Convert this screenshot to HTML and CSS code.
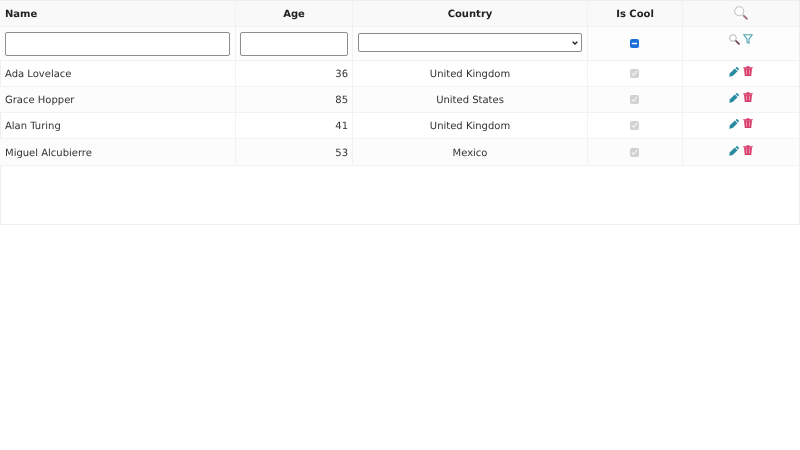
FILE: index.html
```html
<!DOCTYPE html>
<html lang="en">
<head>
<meta charset="utf-8">
<title>Grid</title>
<link rel="stylesheet" href="styles.css">
</head>
<body>
<div class="grid">
<table class="table">
<colgroup><col class="c-name"><col class="c-age"><col class="c-country"><col class="c-cool"><col class="c-actions"></colgroup>
<thead>
<tr class="head">
<th class="left">Name</th><th>Age</th><th>Country</th><th>Is Cool</th>
<th><svg class="icon-search-lg" viewBox="0 0 14 14"><circle cx="5.2" cy="5.2" r="4.5" fill="#fff" stroke="#c4c4c4" stroke-width="1.1"/><path d="M8.4 8.4l1.2 1.2" stroke="#b9b9b9" stroke-width="1.1"/><path d="M9.4 9.4l4 4" stroke="#a0626f" stroke-width="1.7"/></svg></th>
</tr>
<tr class="filter">
<td><input class="text" type="text"></td>
<td><input class="text" type="text"></td>
<td><select class="sel"><option></option></select></td>
<td class="center cool"><input class="chk chk-head" id="cool" type="checkbox"></td>
<td class="center"><div class="actions filter-actions">
<svg class="ic" viewBox="0 0 11 11"><circle cx="4" cy="4" r="3.3" fill="#fff" stroke="#b4b4b4"/><path d="M6.5 6.5l4 4" stroke="#6e3a48" stroke-width="1.6"/></svg>
<svg class="ic-f" viewBox="0 0 10 10"><path d="M.6.7h8.8L6 4.8v4.6L4 8.2V4.8z" fill="#fff" stroke="#4da5b0" stroke-width="1.1" stroke-linejoin="round"/></svg>
</div></td>
</tr>
</thead>
<tbody>
<tr><td>Ada Lovelace</td><td class="right">36</td><td class="center">United Kingdom</td><td class="center cool"><input class="chk" type="checkbox" checked disabled></td><td class="center"><div class="actions"><svg class="ic-p" viewBox="0 0 11 11"><path d="M.3 10.7L1 7l5.4-5.4 3 3L4 10z" fill="#2a8ba0"/><path d="M7.1 1L8.2.2c.4-.3.8-.2 1.1.1l1.4 1.4c.3.3.4.7.1 1.1L10 3.9z" fill="#2a8ba0"/></svg><svg class="ic-t" viewBox="0 0 10 10"><path d="M.2 1.2h9.6v1.1H.2zM3.2 1.3L3.7.2h2.6l.5 1.1z" fill="#d63a68"/><path d="M1 2.3h8L8.2 10H1.8z" fill="#d63a68"/><path d="M3.6 3.5v5.2M6.4 3.5v5.2" stroke="#f3a8bf" stroke-width=".9"/></svg></div></td></tr>
<tr class="odd"><td>Grace Hopper</td><td class="right">85</td><td class="center">United States</td><td class="center cool"><input class="chk" type="checkbox" checked disabled></td><td class="center"><div class="actions"><svg class="ic-p" viewBox="0 0 11 11"><path d="M.3 10.7L1 7l5.4-5.4 3 3L4 10z" fill="#2a8ba0"/><path d="M7.1 1L8.2.2c.4-.3.8-.2 1.1.1l1.4 1.4c.3.3.4.7.1 1.1L10 3.9z" fill="#2a8ba0"/></svg><svg class="ic-t" viewBox="0 0 10 10"><path d="M.2 1.2h9.6v1.1H.2zM3.2 1.3L3.7.2h2.6l.5 1.1z" fill="#d63a68"/><path d="M1 2.3h8L8.2 10H1.8z" fill="#d63a68"/><path d="M3.6 3.5v5.2M6.4 3.5v5.2" stroke="#f3a8bf" stroke-width=".9"/></svg></div></td></tr>
<tr><td>Alan Turing</td><td class="right">41</td><td class="center">United Kingdom</td><td class="center cool"><input class="chk" type="checkbox" checked disabled></td><td class="center"><div class="actions"><svg class="ic-p" viewBox="0 0 11 11"><path d="M.3 10.7L1 7l5.4-5.4 3 3L4 10z" fill="#2a8ba0"/><path d="M7.1 1L8.2.2c.4-.3.8-.2 1.1.1l1.4 1.4c.3.3.4.7.1 1.1L10 3.9z" fill="#2a8ba0"/></svg><svg class="ic-t" viewBox="0 0 10 10"><path d="M.2 1.2h9.6v1.1H.2zM3.2 1.3L3.7.2h2.6l.5 1.1z" fill="#d63a68"/><path d="M1 2.3h8L8.2 10H1.8z" fill="#d63a68"/><path d="M3.6 3.5v5.2M6.4 3.5v5.2" stroke="#f3a8bf" stroke-width=".9"/></svg></div></td></tr>
<tr class="odd"><td>Miguel Alcubierre</td><td class="right">53</td><td class="center">Mexico</td><td class="center cool"><input class="chk" type="checkbox" checked disabled></td><td class="center"><div class="actions"><svg class="ic-p" viewBox="0 0 11 11"><path d="M.3 10.7L1 7l5.4-5.4 3 3L4 10z" fill="#2a8ba0"/><path d="M7.1 1L8.2.2c.4-.3.8-.2 1.1.1l1.4 1.4c.3.3.4.7.1 1.1L10 3.9z" fill="#2a8ba0"/></svg><svg class="ic-t" viewBox="0 0 10 10"><path d="M.2 1.2h9.6v1.1H.2zM3.2 1.3L3.7.2h2.6l.5 1.1z" fill="#d63a68"/><path d="M1 2.3h8L8.2 10H1.8z" fill="#d63a68"/><path d="M3.6 3.5v5.2M6.4 3.5v5.2" stroke="#f3a8bf" stroke-width=".9"/></svg></div></td></tr>
</tbody>
</table>
</div>
<script>document.getElementById('cool').indeterminate = true;</script>
</body>
</html>
```
FILE: styles.css
```css
html, body { margin: 0; padding: 0; background: #fff; }
body { font-family: "DejaVu Sans", sans-serif; font-size: 10px; color: #333; text-rendering: geometricPrecision; }
.grid { box-sizing: border-box; width: 800px; height: 225px; border: 1px solid #eee; border-top: 0; }
.table { width: 799px; margin-right: -1px; margin-left: -1px; border-collapse: separate; border-spacing: 0; table-layout: fixed; filter: blur(.3px); }
.c-name { width: 236px; }
.c-age { width: 117px; }
.c-country { width: 235px; }
.c-cool { width: 95px; }
.c-actions { width: 116px; }
th, td { box-sizing: border-box; padding: 0 5px; border-right: 1px solid #f2f2f2; border-bottom: 1px solid #f2f2f2; text-align: left; vertical-align: middle; }
th:last-child, td:last-child { border-right: 0; }
th:nth-child(2), td:nth-child(2) { padding-left: 4px; padding-right: 4px; }
th { height: 27px; padding-top: 2px; background: #f9f9f9; color: #222; text-align: center; font-weight: 700; border-top: 1px solid #eee; line-height: 14px; }
th.left { text-align: left; }
.filter td { height: 34px; background: #fdfdfd; padding-top: 1px; }
tbody td { height: 26px; padding-top: 2px; }
tbody tr:last-child td { height: 27px; padding-top: 3px; }
.odd td { background: #fcfcfc; }
.center { text-align: center; }
.right { text-align: right; }
td.cool { padding-right: 7px; }
.text { display: block; box-sizing: border-box; width: 100%; height: 24px; margin: 0; padding: 1px 2px; border: 1px solid #8e8e8e; border-radius: 2px; background: #fff; }
.sel { display: block; box-sizing: border-box; width: 100%; height: 19px; margin: 0 0 3px; border: 1px solid #8a8a8a; border-radius: 2px; appearance: none; background: #fff url("data:image/svg+xml,%3Csvg xmlns='http://www.w3.org/2000/svg' width='6' height='4' viewBox='0 0 6 4'%3E%3Cpath d='M.7.7L3 3l2.3-2.3' fill='none' stroke='%23222' stroke-width='1.4'/%3E%3C/svg%3E") no-repeat right 3px center; font: 10px "DejaVu Sans", sans-serif; color: #000; }
.chk { display: block; width: 9px; height: 9px; margin: -3px auto 0; accent-color: #1a6fd8; }
.chk-head { margin-top: -1px; }
.actions { display: flex; justify-content: center; align-items: center; gap: 4px; height: 14px; margin-top: -5px; }
.filter-actions { margin-top: -10px; gap: 3px; }
.icon-search-lg { display: block; width: 14px; height: 14px; margin: -4px auto 0; }
.ic { width: 11px; height: 11px; }
.ic-f { width: 10px; height: 10px; margin-top: -1px; }
.ic-p { width: 10px; height: 10px; }
.ic-t { width: 10px; height: 10px; margin-top: -3px; }
```
